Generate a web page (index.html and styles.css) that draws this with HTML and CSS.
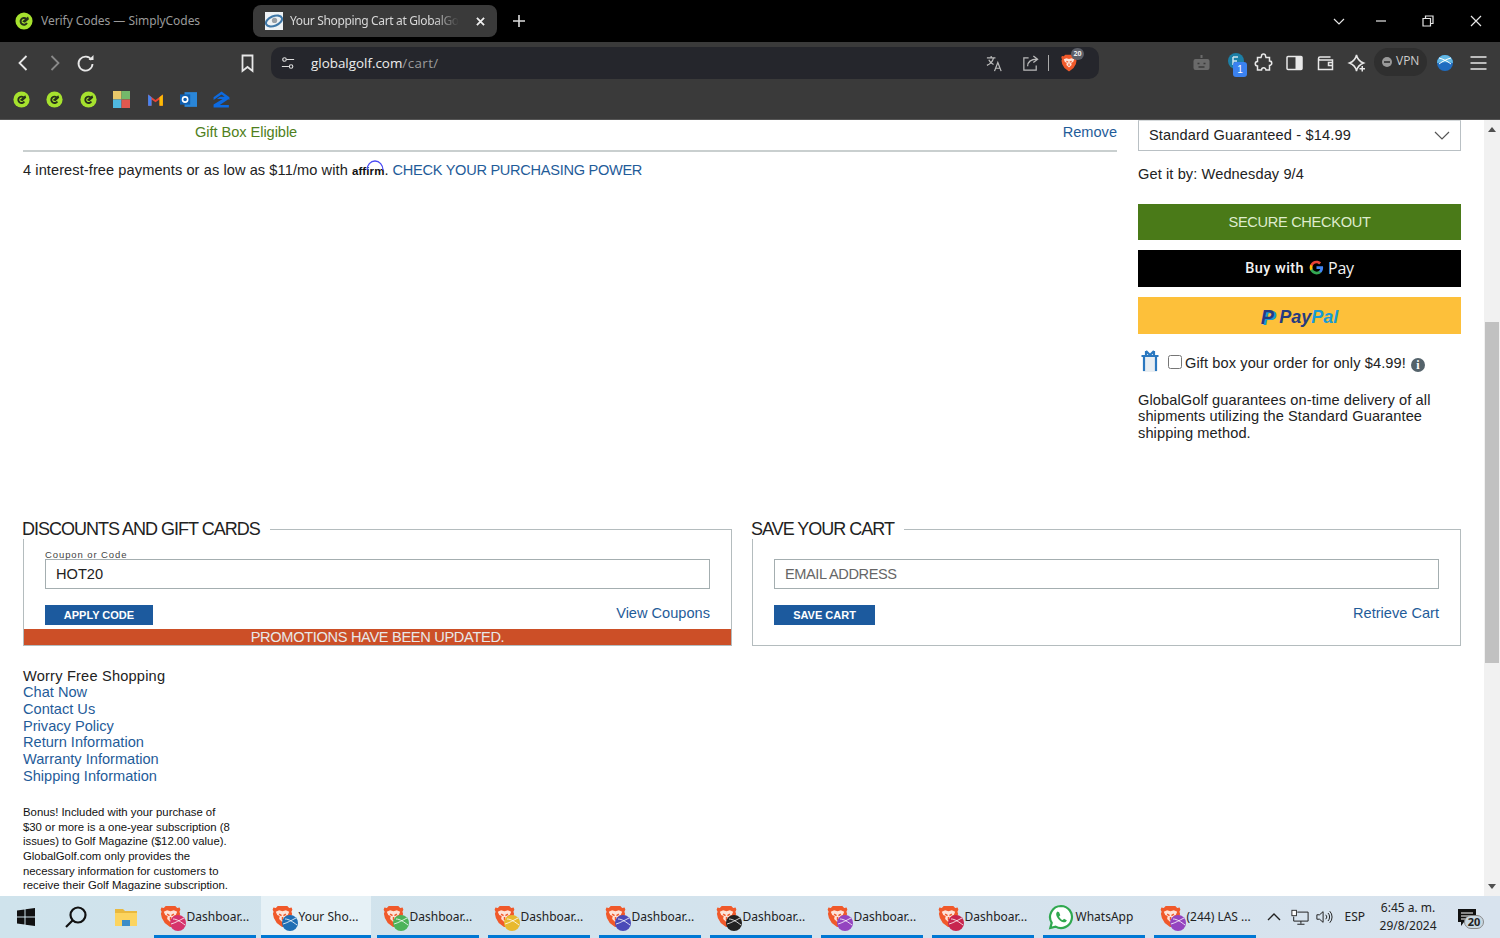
FILE: index.html
```html
<!DOCTYPE html>
<html lang="es">

<head>
    <meta charset="UTF-8" />
    <meta name="viewport" content="width=device-width, initial-scale=1.0" />
    <title>Your Shopping Cart at GlobalGolf</title>
    <link rel="stylesheet" href="styles.css">
</head>

<body>
    <svg class="defs" xmlns="http://www.w3.org/2000/svg">
        <symbol id="simply" viewBox="0 0 20 20">
            <circle cx="10" cy="10" r="9.5" fill="#a6e22e" />
            <path d="M12.500 7.500a3.800 3.800 0 1 0 .8 4.800" fill="none" stroke="#26301a" stroke-width="2.200" />
            <path d="M8 10.500l6.500-5.500 1 3-4.500 4z" fill="#26301a" />
        </symbol>
        <symbol id="brave" viewBox="0 0 24 24">
            <path d="M7 1h10l2 2 2.500-.3.800 2.300-1 2 .7 2-1 4.500-3 5.200-5.500 4.300h-1L6 18.700l-3-5.200-1-4.500.7-2-1-2L2.500 2.700 5 3z" fill="#f0592a" />
            <path d="M5 7l3.500-1.500L12 6.500l3.500-1L19 7l-1.500 3.500-2.500 1 .5 3L12 18l-3.500-3.500.5-3-2.500-1z" fill="#fde3d8" />
            <path d="M8.500 9.500l2.500 1.500M15.500 9.500L13 11M12 12.500v3.500" stroke="#f0592a" stroke-width="1.500" fill="none" />
        </symbol>
        <symbol id="globe" viewBox="0 0 16 16">
            <circle cx="8" cy="8" r="8" fill="currentColor" />
            <path d="M1 9c4-1 9-4 13-6M3 4c4 0 8 3 12 6" stroke="#fff" stroke-width="1" fill="none" opacity=".8" />
        </symbol>
    </svg>

    <header class="tabbar">
        <div class="tab">
            <svg class="tab-icon"><use href="#simply" /></svg>
            <span class="tab-title">Verify Codes — SimplyCodes</span>
        </div>
        <div class="tab tab-active">
            <svg class="tab-icon" viewBox="0 0 17 17">
                <rect width="17" height="17" fill="#eef2f5" />
                <ellipse cx="8.500" cy="8.500" rx="8" ry="4.500" fill="none" stroke="#3f78a8" stroke-width="2" transform="rotate(-22 8.500 8.500)" />
                <circle cx="9" cy="8" r="2.500" fill="#9a9fa5" />
            </svg>
            <span class="tab-title">Your Shopping Cart at GlobalGolf</span>
            <svg class="tab-close" viewBox="0 0 10 10"><path d="M1 1l8 8M9 1l-8 8" /></svg>
        </div>
        <svg class="new-tab" viewBox="0 0 12 12"><path d="M6 0v12M0 6h12" /></svg>
        <div class="window-btns">
            <svg class="win-btn" viewBox="0 0 12 12"><path d="M1 4l5 5 5-5" /></svg>
            <svg class="win-btn win-min" viewBox="0 0 12 12"><path d="M1 6h10" /></svg>
            <svg class="win-btn win-max" viewBox="0 0 12 12"><path d="M1 3.500h7.500V11H1zM3.500 3.500V1H11v7.500H8.500" /></svg>
            <svg class="win-btn win-close" viewBox="0 0 12 12"><path d="M1 1l10 10M11 1L1 11" /></svg>
        </div>
    </header>

    <nav class="toolbar">
        <svg class="tool" viewBox="0 0 20 20"><path d="M13 3l-7 7 7 7" /></svg>
        <svg class="tool tool-dim" viewBox="0 0 20 20"><path d="M7 3l7 7-7 7" /></svg>
        <svg class="tool" viewBox="0 0 20 20"><path d="M16 7a7 7 0 1 0 1 4" /><path class="solid" d="M13 7h5V2z" /></svg>
        <svg class="tool tool-bookmark" viewBox="0 0 20 20"><path d="M5 2.500h10V18l-5-4-5 4z" /></svg>
        <div class="urlbar">
            <svg class="url-tune" viewBox="0 0 16 16"><path d="M6 4h9M1 12h8" /><circle cx="4" cy="4" r="2" /><circle cx="11.500" cy="12" r="2" /></svg>
            <span class="url-host">globalgolf.com</span><span class="url-path">/cart/</span>
            <div class="url-actions">
                <svg class="url-icon" viewBox="0 0 20 20"><path d="M2 4h9M6.500 2v2M9 4c-1 4-3.500 6.500-7 8M4 6c1 2.500 3 4 5 5M10 18l3.500-9 3.500 9M11.200 15h4.600" /></svg>
                <svg class="url-icon" viewBox="0 0 20 20"><path d="M8 4H3v13h13v-5M7 13c0-5 4-7.500 10-7.500M13 2l4.500 3.500L13 9" /></svg>
                <span class="url-sep"></span>
                <div class="shield">
                    <svg class="shield-icon"><use href="#brave" /></svg>
                    <span class="shield-count">20</span>
                </div>
            </div>
        </div>
        <div class="toolbar-right">
            <svg class="ext" viewBox="0 0 20 20"><path d="M9 2h2v3H9zM4 6h12a2 2 0 0 1 2 2v7a2 2 0 0 1-2 2H4a2 2 0 0 1-2-2V8a2 2 0 0 1 2-2z" /><path class="bot-face" d="M6 10.500h2M12 10.500h2M7 14h6" /></svg>
            <div class="ext ext-badged">
                <svg class="ext-fi" viewBox="0 0 16 16"><circle cx="8" cy="8" r="8" fill="#1c7fa6" /><path d="M5 4h5M5 4v8M5 8h4" stroke="#cfe6f0" stroke-width="1.500" fill="none" /></svg>
                <span class="ext-badge">1</span>
            </div>
            <svg class="tool tool-line" viewBox="0 0 20 20"><path d="M8 3a2 2 0 0 1 4 0l.5 1.500H16V8a2 2 0 0 1 0 4.500V17h-3.500a2.200 2.200 0 0 0-4.500 0H4v-4a2.200 2.200 0 0 1 0-4.500V4.500h3.500z" /></svg>
            <svg class="tool tool-line" viewBox="0 0 20 20"><rect x="2.500" y="3.500" width="15" height="13" rx="1" /><path class="solid" d="M11 3.500h6.500v13H11z" /></svg>
            <svg class="tool tool-line" viewBox="0 0 20 20"><path d="M15 4H4.500a1.500 1.500 0 0 0 0 3H17v9.500H3V5.500M17 9.500h-4v3h4" /></svg>
            <svg class="tool tool-line" viewBox="0 0 20 20"><path d="M10 2c.8 4 3 6.500 7 8-4 1.500-6.200 4-7 8-.8-4-3-6.500-7-8 4-1.500 6.200-4 7-8z" /><path class="solid" d="M15 13h1.500v2H18.500v1.500h-2v2H15v-2h-2V15h2z" /></svg>
            <div class="vpn"><span class="vpn-dot"></span>VPN</div>
            <div class="slot">
                <svg class="vpn-globe" viewBox="0 0 16 16"><circle cx="8" cy="8" r="8" fill="#1f6cc0" /><path d="M0 8c5-1 11-1 16 0a8 8 0 0 0-16 0z" fill="#63b8e4" /><path d="M2 3c4 1 8 3 12 6M14 3C10 4 6 6 2 9" stroke="#fff" stroke-width="1" fill="none" /></svg>
            </div>
            <svg class="tool tool-line" viewBox="0 0 20 20"><path d="M2 4h16M2 10h16M2 16h16" /></svg>
        </div>
    </nav>

    <div class="bookmarks">
        <svg class="bm"><use href="#simply" /></svg>
        <svg class="bm"><use href="#simply" /></svg>
        <svg class="bm"><use href="#simply" /></svg>
        <svg class="bm" viewBox="0 0 17 17"><rect width="8.500" height="8.500" fill="#e8c86a" /><rect x="8.500" width="8.500" height="8.500" fill="#74b86a" /><rect y="8.500" width="8.500" height="8.500" fill="#4fb8e0" /><rect x="8.500" y="8.500" width="8.500" height="8.500" fill="#e0584f" /></svg>
        <svg class="bm" viewBox="1 1 15 15"><path d="M2 14V4l6.500 5L15 4v10h-3V8.500L8.500 11 5 8.500V14z" fill="#ea4335" /><path d="M12 14V6.500L15 4v10z" fill="#fbbc04" /><path d="M2 14V4l3 2.500V14z" fill="#4285f4" /></svg>
        <svg class="bm" viewBox="1 1 15 15"><rect x="5" y="2" width="11" height="13" fill="#2a86d8" /><rect x="1" y="4" width="9" height="9" fill="#0f5fb0" /><circle cx="5.500" cy="8.500" r="2.300" fill="none" stroke="#fff" stroke-width="1.400" /></svg>
        <svg class="bm" viewBox="1 0.500 15 15"><path d="M8.500 1l7 5v2.500l-7-5-7 5V6z M1.500 15V12.500l8-5h-5L7 5.500h7.500v2.300l-7.500 5h8V15z" fill="#0d6ae0" /></svg>
    </div>

    <div class="viewport">
        <main class="page">
            <section class="cart-row">
                <div class="cart-left">
                    <div class="item-foot">
                        <span class="gift-eligible">Gift Box Eligible</span>
                        <a class="link">Remove</a>
                    </div>
                    <p class="affirm-line">
                        <span class="affirm-copy">4 interest-free payments or as low as $11/mo with</span>
                        <span class="affirm">affirm<svg class="affirm-arc" viewBox="0 0 20 12"><path d="M2 11a8 9 0 0 1 16 0" /></svg></span>.
                        <a class="link affirm-link">CHECK YOUR PURCHASING POWER</a>
                    </p>
                </div>
                <aside class="cart-right">
                    <div class="ship-select">
                        <span>Standard Guaranteed - $14.99</span>
                        <svg class="select-arrow" viewBox="0 0 16 10"><path d="M1 1l7 7 7-7" /></svg>
                    </div>
                    <p class="get-by">Get it by: Wednesday 9/4</p>
                    <button class="pay-btn btn-checkout">SECURE CHECKOUT</button>
                    <button class="pay-btn btn-gpay">
                        <span class="g-buy">Buy with</span>
                        <svg class="g-logo" viewBox="0 0 24 24">
                            <path fill="#4285f4" d="M22.560 12.250c0-.78-.07-1.530-.2-2.250H12v4.260h5.920c-.26 1.370-1.040 2.530-2.210 3.310v2.770h3.570c2.080-1.920 3.280-4.740 3.280-8.090z" />
                            <path fill="#34a853" d="M12 23c2.970 0 5.460-.98 7.280-2.660l-3.570-2.770c-.98.660-2.230 1.060-3.710 1.060-2.860 0-5.290-1.930-6.160-4.530H2.180v2.840C3.990 20.530 7.700 23 12 23z" />
                            <path fill="#fbbc05" d="M5.840 14.090c-.22-.66-.35-1.360-.35-2.090s.13-1.430.35-2.090V7.070H2.180C1.430 8.550 1 10.220 1 12s.43 3.450 1.180 4.930l3.660-2.840z" />
                            <path fill="#ea4335" d="M12 5.380c1.620 0 3.060.56 4.210 1.640l3.150-3.150C17.450 2.090 14.970 1 12 1 7.700 1 3.990 3.470 2.180 7.070l3.660 2.840c.87-2.600 3.300-4.530 6.160-4.530z" />
                        </svg>
                        <span class="g-pay">Pay</span>
                    </button>
                    <button class="pay-btn btn-paypal">
                        <span class="pp-mark">P</span>
                        <span class="pp-text"><span class="pp-dark">Pay</span><span class="pp-light">Pal</span></span>
                    </button>
                    <div class="giftbox">
                        <svg class="gift-icon" viewBox="0 0 20 24">
                            <rect x="3" y="7" width="14" height="16" fill="#e8eef3" />
                            <path d="M4 7v15M16 7v15M1.500 7h17M10 6L6 2M10 6l4-4M6 2v5M14 2v5" stroke="#2a78c0" stroke-width="2.200" fill="none" />
                        </svg>
                        <input type="checkbox" class="gift-check" />
                        <label class="gift-label">Gift box your order for only $4.99!</label>
                        <span class="info">i</span>
                    </div>
                    <p class="guarantee">GlobalGolf guarantees on-time delivery of all shipments utilizing the Standard Guarantee shipping method.</p>
                </aside>
            </section>

            <section class="forms-row">
                <fieldset class="box">
                    <legend>DISCOUNTS AND GIFT CARDS</legend>
                    <label class="field-label">Coupon or Code</label>
                    <input class="field" type="text" value="HOT20" />
                    <div class="box-actions">
                        <button class="blue-btn btn-apply">APPLY CODE</button>
                        <a class="link box-link">View Coupons</a>
                    </div>
                    <div class="promo-msg">PROMOTIONS HAVE BEEN UPDATED.</div>
                </fieldset>
                <fieldset class="box">
                    <legend>SAVE YOUR CART</legend>
                    <span class="field-label"></span>
                    <input class="field" type="text" placeholder="EMAIL ADDRESS" />
                    <div class="box-actions">
                        <button class="blue-btn btn-save">SAVE CART</button>
                        <a class="link box-link">Retrieve Cart</a>
                    </div>
                </fieldset>
            </section>

            <section class="help">
                <div class="help-title">Worry Free Shopping</div>
                <a class="link">Chat Now</a>
                <a class="link">Contact Us</a>
                <a class="link">Privacy Policy</a>
                <a class="link">Return Information</a>
                <a class="link">Warranty Information</a>
                <a class="link">Shipping Information</a>
            </section>

            <p class="bonus">Bonus! Included with your purchase of $30 or more is a one-year subscription (8 issues) to Golf Magazine ($12.00 value). GlobalGolf.com only provides the necessary information for customers to receive their Golf Magazine subscription. Issues begin mailing in about eight weeks after your order ships.</p>
        </main>
        <div class="scrollbar">
            <span class="arrow-up"></span>
            <span class="thumb"></span>
            <span class="arrow-down"></span>
        </div>
    </div>

    <footer class="taskbar">
        <svg class="task-start" viewBox="0 0 18 18"><path d="M0 2.500L7.500 1.500v7H0zM8.500 1.300L18 0v8.500H8.500zM0 9.500h7.500v7L0 15.500zM8.500 9.500H18V18l-9.500-1.300z" /></svg>
        <svg class="task-search" viewBox="0 0 24 24"><circle cx="14" cy="10" r="7.500" /><path d="M8.500 15.500L2 22" /></svg>
        <svg class="task-folder" viewBox="0 0 24 20"><path d="M1 2h8l2 2h12v3H1z" fill="#e9b93f" /><path d="M1 6h22v13H1z" fill="#fcd45f" /><path d="M8 19v-6h8v6z" fill="#3c8cc8" /></svg>

        <div class="task-item"><span class="task-icon"><svg class="brave-big"><use href="#brave" /></svg><svg class="task-globe globe-red"><use href="#globe" /></svg></span><span class="task-name">Dashboar...</span></div>
        <div class="task-item task-active"><span class="task-icon"><svg class="brave-big"><use href="#brave" /></svg><svg class="task-globe globe-blue"><use href="#globe" /></svg></span><span class="task-name">Your Sho...</span></div>
        <div class="task-item"><span class="task-icon"><svg class="brave-big"><use href="#brave" /></svg><svg class="task-globe globe-green"><use href="#globe" /></svg></span><span class="task-name">Dashboar...</span></div>
        <div class="task-item"><span class="task-icon"><svg class="brave-big"><use href="#brave" /></svg><svg class="task-globe globe-yellow"><use href="#globe" /></svg></span><span class="task-name">Dashboar...</span></div>
        <div class="task-item"><span class="task-icon"><svg class="brave-big"><use href="#brave" /></svg><svg class="task-globe globe-indigo"><use href="#globe" /></svg></span><span class="task-name">Dashboar...</span></div>
        <div class="task-item"><span class="task-icon"><svg class="brave-big"><use href="#brave" /></svg><svg class="task-globe globe-black"><use href="#globe" /></svg></span><span class="task-name">Dashboar...</span></div>
        <div class="task-item"><span class="task-icon"><svg class="brave-big"><use href="#brave" /></svg><svg class="task-globe globe-purple"><use href="#globe" /></svg></span><span class="task-name">Dashboar...</span></div>
        <div class="task-item"><span class="task-icon"><svg class="brave-big"><use href="#brave" /></svg><svg class="task-globe globe-crimson"><use href="#globe" /></svg></span><span class="task-name">Dashboar...</span></div>
        <div class="task-item">
            <span class="task-icon">
                <svg class="whatsapp" viewBox="0 0 26 26"><path d="M13 2a11 11 0 0 0-9.300 16.800L2.300 24l5.300-1.400A11 11 0 1 0 13 2z" fill="#fff" stroke="#2fa84f" stroke-width="2.200" /><path d="M9.500 7.500c-1.500 1-1.800 3-.5 5.500 1.500 2.800 4 4.800 6.500 5.300 1.800.3 3-.6 3.300-2l-2.800-1.500-1.200 1.300c-1.500-.5-3-2-3.700-3.700l1.200-1.200-1.200-3z" fill="#2fa84f" /></svg>
            </span>
            <span class="task-name">WhatsApp</span>
        </div>
        <div class="task-item"><span class="task-icon"><svg class="brave-big"><use href="#brave" /></svg><svg class="task-globe globe-purple"><use href="#globe" /></svg></span><span class="task-name">(244) LAS ...</span></div>

        <div class="tray">
            <svg class="tray-chevron" viewBox="0 0 14 10"><path d="M1 8l6-6 6 6" /></svg>
            <svg class="tray-net" viewBox="0 0 20 18"><path d="M7 3h12v10H3V8M11 13v3M7 16.500h8" /><rect x="1" y="1" width="5" height="6" fill="#fff" /></svg>
            <svg class="tray-sound" viewBox="0 0 20 18"><path d="M2 6.500h3L9 3v12l-4-3.500H2zM12 6.500a3.500 3.500 0 0 1 0 5M14.500 4.500a6.500 6.500 0 0 1 0 9M16.500 2.500a9.500 9.500 0 0 1 0 13" /></svg>
            <span class="tray-lang">ESP</span>
            <div class="clock"><span>6:45 a. m.</span><span>29/8/2024</span></div>
            <div class="notif">
                <svg class="notif-icon" viewBox="0 0 18 17"><path d="M0 0h18v13H6l-3 4v-4H0z" /><path d="M3 4h12M3 7h12M3 10h8" stroke="#fff" stroke-width="1" /></svg>
                <span class="notif-count">20</span>
            </div>
        </div>
    </footer>
</body>

</html>
```

FILE: styles.css
```css
* {
    box-sizing: border-box;
    margin: 0;
    padding: 0;
}

html,
body {
    height: 100%;
}

body {
    display: flex;
    flex-direction: column;
    overflow: hidden;
    font-family: 'Liberation Sans', Arial, sans-serif;
    font-size: 14.6px;
    line-height: 16.67px;
    color: #222;
    background: #fff;
}

.defs {
    display: none;
}

/* browser chrome */
.tabbar {
    height: 42px;
    flex: none;
    display: flex;
    align-items: center;
    background: #000;
    font-family: 'Noto Sans', sans-serif;
    font-size: 12px;
    color: #9a9a9a;
}

.tab {
    width: 253px;
    height: 32px;
    display: flex;
    align-items: center;
    gap: 8px;
    padding-left: 15px;
    overflow: hidden;
}

.tab-active {
    width: 244px;
    gap: 7px;
    padding-left: 12px;
    border-radius: 8px;
    background: #3a3a3a;
    color: #d8d8d8;
}

.tab-icon {
    width: 18px;
    height: 18px;
    flex: none;
}

.tab-title {
    flex: 1;
    white-space: nowrap;
    overflow: hidden;
    letter-spacing: -0.05px;
}

.tab-active .tab-title {
    letter-spacing: -0.35px;
    -webkit-mask-image: linear-gradient(to right, #000 85%, transparent);
    mask-image: linear-gradient(to right, #000 85%, transparent);
}

.tab-close {
    width: 9px;
    height: 9px;
    flex: none;
    margin: 0 12px 0 10px;
    fill: none;
    stroke: #eee;
    stroke-width: 2;
}

.new-tab {
    width: 12px;
    height: 12px;
    margin-left: 16px;
    fill: none;
    stroke: #ddd;
    stroke-width: 1.6;
}

.window-btns {
    margin-left: auto;
    display: flex;
    align-items: center;
    padding-right: 18px;
}

.win-btn {
    width: 12px;
    height: 12px;
    fill: none;
    stroke: #e6e6e6;
    stroke-width: 1.2;
}

.win-min {
    margin-left: 30px;
}

.win-max {
    margin-left: 35px;
}

.win-close {
    margin-left: 36px;
}

.toolbar {
    height: 42px;
    flex: none;
    display: flex;
    align-items: center;
    padding-left: 8px;
    background: #3a3a3a;
    color: #e8e8e8;
}

.tool {
    width: 31px;
    height: 20px;
    flex: none;
    fill: none;
    stroke: #e8e8e8;
    stroke-width: 1.8;
}

.tool-line {
    stroke-width: 1.5;
}

.tool .solid {
    fill: #e8e8e8;
    stroke: none;
}

.tool-dim {
    stroke: #8a8a8a;
}

.tool-bookmark {
    margin-left: 131px;
}

.urlbar {
    width: 828px;
    height: 32px;
    margin-left: 8px;
    display: flex;
    align-items: center;
    padding-left: 10px;
    border-radius: 10px;
    background: #25262c;
    font-family: 'Open Sans', sans-serif;
    font-size: 13.4px;
}

.url-tune {
    width: 14px;
    height: 14px;
    margin-right: 16px;
    fill: none;
    stroke: #ddd;
    stroke-width: 1.3;
}

.url-host {
    color: #eee;
}

.url-path {
    color: #9b9b9b;
    letter-spacing: 0.4px;
}

.url-actions {
    margin-left: auto;
    display: flex;
    align-items: center;
    padding-right: 21px;
}

.url-icon {
    width: 19px;
    height: 19px;
    margin-right: 17px;
    fill: none;
    stroke: #bbb;
    stroke-width: 1.3;
}

.url-sep {
    width: 1px;
    height: 16px;
    margin: 0 11px 0 -9px;
    background: #aaa;
}

.shield {
    position: relative;
    width: 18px;
    height: 20px;
}

.shield-icon {
    width: 18px;
    height: 20px;
}

.shield-count {
    position: absolute;
    top: -5px;
    right: -6px;
    width: 13px;
    height: 12px;
    border-radius: 6px;
    background: #5c5f68;
    color: #eee;
    font-size: 7px;
    line-height: 12px;
    text-align: center;
    font-weight: 700;
}

.toolbar-right {
    margin-left: 86px;
    display: flex;
    align-items: center;
}

.ext {
    width: 31px;
    height: 20px;
    flex: none;
}

svg.ext {
    fill: #6a6a6a;
    margin-left: 1px;
}

.bot-face {
    fill: none;
    stroke: #3a3a3a;
    stroke-width: 1.5;
}

.ext-badged {
    position: relative;
    margin-left: 9px;
    margin-right: -9px;
}

.ext-fi {
    width: 16px;
    height: 16px;
    margin-left: 2px;
}

.ext-badge {
    position: absolute;
    left: 7px;
    top: 9px;
    width: 14px;
    height: 15px;
    border-radius: 3px;
    background: #3b82f0;
    color: #fff;
    font-size: 10px;
    line-height: 15px;
    text-align: center;
}

.vpn {
    width: 53px;
    height: 28px;
    margin-left: 2px;
    margin-top: -3px;
    display: flex;
    align-items: center;
    gap: 4px;
    padding-left: 8px;
    border-radius: 14px;
    background: #2f2f2f;
    color: #ccc;
    font-family: 'Open Sans', sans-serif;
    font-size: 12px;
}

.vpn-dot {
    width: 10px;
    height: 10px;
    flex: none;
    display: flex;
    align-items: center;
    justify-content: center;
    border-radius: 50%;
    background: #999;
}

.vpn-dot::after {
    content: "";
    width: 6px;
    height: 2px;
    background: #444;
}

.slot {
    width: 36px;
    display: flex;
    justify-content: center;
}

.vpn-globe {
    width: 16px;
    height: 16px;
}

.bookmarks {
    height: 36px;
    flex: none;
    display: flex;
    align-items: center;
    gap: 16.4px;
    padding: 0 0 4px 13px;
    background: #3a3a3a;
    border-bottom: 1px solid #555;
}

.bm {
    width: 17px;
    height: 17px;
    flex: none;
}

/* page */
.viewport {
    flex: 1;
    min-height: 0;
    display: flex;
    background: #fff;
}

.page {
    flex: 1;
    min-width: 0;
    padding: 0 23px;
    overflow: hidden;
}

.link {
    color: #1f5c99;
}

.cart-row {
    height: 399px;
    display: flex;
    gap: 21px;
}

.cart-left {
    flex: 1;
}

.item-foot {
    height: 32px;
    display: flex;
    justify-content: space-between;
    align-items: center;
    padding: 0 0 6px 172px;
    border-bottom: 2px solid #c9cfcf;
}

.gift-eligible {
    color: #4f7f20;
    letter-spacing: -0.05px;
}

.affirm-line {
    margin-top: 10px;
}

.affirm-copy {
    letter-spacing: 0.08px;
}

.affirm-link {
    letter-spacing: -0.3px;
}

.affirm {
    position: relative;
    font-size: 11.5px;
    font-weight: 700;
    color: #111;
    letter-spacing: 0.1px;
}

.affirm-arc {
    position: absolute;
    right: -1px;
    top: -6px;
    width: 20px;
    height: 12px;
    fill: none;
    stroke: #4a4af4;
    stroke-width: 1.3;
}

.cart-right {
    width: 323px;
    flex: none;
    letter-spacing: 0.1px;
}

.ship-select {
    height: 31px;
    display: flex;
    align-items: center;
    justify-content: space-between;
    padding: 0 10px;
    border: 1px solid #b9c0c4;
    border-top-color: #d5d9db;
    letter-spacing: 0.14px;
}

.select-arrow {
    width: 16px;
    height: 10px;
    fill: none;
    stroke: #555;
    stroke-width: 1.2;
}

.get-by {
    margin: 15px 0 21px;
}

.pay-btn {
    display: flex;
    width: 100%;
    height: 37px;
    margin-bottom: 10px;
    align-items: center;
    justify-content: center;
    border: none;
    font-family: inherit;
}

.btn-checkout {
    height: 36px;
    background: #4a7a18;
    color: #dfeccd;
    font-size: 14.6px;
    letter-spacing: -0.32px;
}

.btn-gpay {
    gap: 5px;
    background: #000;
    color: #f2f2f2;
    font-family: Roboto, sans-serif;
    font-size: 14.5px;
    font-weight: 500;
}

.g-buy {
    letter-spacing: 0.45px;
}

.g-logo {
    width: 15px;
    height: 15px;
    margin-top: -1px;
}

.g-pay {
    margin-left: -1px;
    font-family: 'Open Sans', sans-serif;
    font-size: 16px;
    font-weight: 500;
    letter-spacing: -0.3px;
}

.btn-paypal {
    gap: 3px;
    padding-top: 4px;
    background: #fdc03a;
    font-size: 18px;
    font-style: italic;
    font-weight: 700;
}

.pp-mark {
    color: #253b80;
    font-size: 20px;
    text-shadow: 2px 1px 0 #179bd7;
    margin-right: 2px;
}

.pp-dark {
    color: #253b80;
}

.pp-light {
    color: #179bd7;
}

.giftbox {
    display: flex;
    align-items: center;
    margin-top: 18px;
}

.gift-icon {
    width: 20px;
    height: 24px;
    margin: -3px 0 0 2px;
}

.gift-check {
    width: 14px;
    height: 14px;
    margin: 0 3px 0 8px;
}

.gift-label {
    margin-top: 3px;
}

.info {
    width: 14px;
    height: 14px;
    margin: 5px 0 0 5px;
    border-radius: 50%;
    background: #55636b;
    color: #fff;
    font-family: 'Liberation Serif', serif;
    font-size: 12px;
    font-weight: 700;
    line-height: 14px;
    text-align: center;
}

.guarantee {
    margin-top: 19px;
}

/* discount and save boxes */
.forms-row {
    display: flex;
    gap: 20px;
}

.box {
    flex: 1;
    height: 127px;
    min-width: 0;
    padding: 0 21px;
    border: 1px solid #b4bcbe;
    position: relative;
}

.box legend {
    margin-left: -23px;
    padding-right: 10px;
    background: #fff;
    font-size: 18px;
    line-height: 20px;
    letter-spacing: -1px;
    color: #222;
}

.field-label {
    display: block;
    height: 10px;
    margin-top: 10px;
    font-size: 9.5px;
    line-height: 11px;
    letter-spacing: 0.9px;
    color: #444;
}

.field {
    display: block;
    width: 100%;
    height: 30px;
    padding: 0 10px;
    border: 1px solid #a4aeb0;
    background: #fff;
    font-family: inherit;
    font-size: 14.6px;
    color: #222;
    outline: none;
}

.field::placeholder {
    color: #666;
    letter-spacing: -0.42px;
}

.box-actions {
    display: flex;
    align-items: center;
    justify-content: space-between;
    margin-top: 16px;
}

.box-link {
    margin-top: -3px;
}

.blue-btn {
    height: 20px;
    padding-bottom: 1px;
    border: none;
    background: #1c5a9e;
    color: #fff;
    font-family: inherit;
    font-size: 11px;
    font-weight: 700;
}

.btn-apply {
    width: 108px;
}

.btn-save {
    width: 101px;
}

.promo-msg {
    position: absolute;
    left: 0;
    right: 0;
    bottom: 0;
    height: 16px;
    background: #cc4f27;
    color: #e8e8e8;
    font-size: 14.6px;
    line-height: 16px;
    letter-spacing: -0.32px;
    text-align: center;
}

/* footer links */
.help {
    margin-top: 21.5px;
    display: flex;
    flex-direction: column;
    align-items: flex-start;
}

.help-title {
    letter-spacing: 0.2px;
}

.bonus {
    width: 210px;
    margin-top: 21px;
    font-size: 11.35px;
    line-height: 14.6px;
    color: #111;
}

.scrollbar {
    width: 16px;
    flex: none;
    display: flex;
    flex-direction: column;
    align-items: center;
    background: #f1f1f1;
}

.arrow-up,
.arrow-down {
    width: 0;
    height: 0;
    margin-top: 7px;
    border-left: 4px solid transparent;
    border-right: 4px solid transparent;
}

.arrow-up {
    border-bottom: 5px solid #505050;
}

.arrow-down {
    margin: auto 0 7px;
    border-top: 5px solid #505050;
}

.thumb {
    width: 14px;
    height: 341px;
    margin-top: 190px;
    background: #c1c1c1;
}

/* windows taskbar */
.taskbar {
    height: 42px;
    flex: none;
    display: flex;
    align-items: center;
    padding-left: 17px;
    background: linear-gradient(to right, #cfe3ec, #d8e3ee);
    font-family: 'Noto Sans', sans-serif;
    font-size: 12px;
    color: #222;
}

.task-start {
    width: 18px;
    height: 18px;
    flex: none;
    fill: #111;
}

.task-search {
    width: 24px;
    height: 24px;
    flex: none;
    margin-left: 29px;
    fill: none;
    stroke: #111;
    stroke-width: 2.2;
}

.task-folder {
    width: 24px;
    height: 20px;
    flex: none;
    margin-left: 26px;
    margin-right: 15.5px;
}

.task-item {
    width: 102px;
    height: 42px;
    flex: none;
    display: flex;
    align-items: center;
    gap: 3px;
    padding: 3px 0 0 5px;
    margin-right: 9px;
    border-bottom: 3px solid #0078d4;
    white-space: nowrap;
}

.task-active {
    width: 110px;
    margin-left: -4px;
    margin-right: 6px;
    padding-left: 10px;
    background: #e6f1f6;
}

.task-icon {
    position: relative;
    width: 25px;
    height: 26px;
    flex: none;
}

.brave-big {
    width: 23px;
    height: 25px;
}

.task-globe {
    position: absolute;
    right: -2px;
    bottom: -1px;
    width: 16px;
    height: 16px;
}

.globe-red { color: #d6336c; }
.globe-blue { color: #1f6fb5; }
.globe-green { color: #4cb35a; }
.globe-yellow { color: #e8b92e; }
.globe-indigo { color: #4a4ab8; }
.globe-black { color: #222; }
.globe-purple { color: #9444c0; }
.globe-crimson { color: #c8264f; }

.whatsapp {
    width: 26px;
    height: 26px;
}

.tray {
    flex: 1;
    display: flex;
    align-items: center;
    padding-left: 2px;
}

.tray-chevron {
    width: 14px;
    height: 10px;
    fill: none;
    stroke: #222;
    stroke-width: 1.4;
}

.tray-net {
    width: 18px;
    height: 17px;
    margin-left: 10px;
    fill: none;
    stroke: #222;
    stroke-width: 1.1;
}

.tray-net rect {
    stroke-width: 1;
}

.tray-sound {
    width: 18px;
    height: 16px;
    margin-left: 6px;
    fill: none;
    stroke: #222;
    stroke-width: 1.1;
}

.tray-lang {
    margin-left: 12px;
}

.clock {
    width: 56px;
    margin-left: 15px;
    display: flex;
    flex-direction: column;
    align-items: center;
    gap: 2px;
    line-height: 16px;
}

.notif {
    position: relative;
    margin-left: 22px;
    width: 18px;
    height: 17px;
}

.notif-icon {
    display: block;
    width: 18px;
    height: 17px;
    fill: #111;
}

.notif-count {
    position: absolute;
    left: 6px;
    top: 6px;
    width: 20px;
    height: 14px;
    border-radius: 8px;
    border: 1px solid #888;
    background: #c9d8e2;
    font-size: 11px;
    font-weight: 700;
    line-height: 12px;
    text-align: center;
}
```
